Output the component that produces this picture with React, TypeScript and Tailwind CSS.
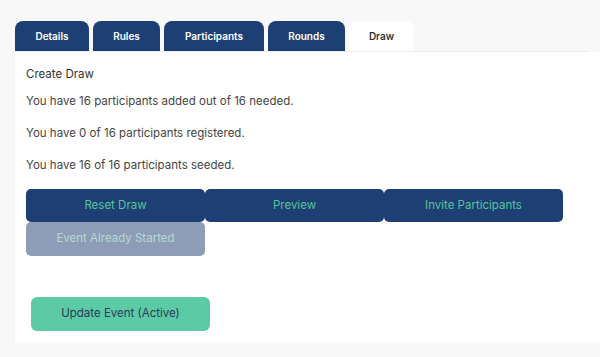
import React from 'react';

const tabs = [
  { label: 'Details', width: 'w-[74px]' },
  { label: 'Rules', width: 'w-[67px]' },
  { label: 'Participants', width: 'w-[100px]' },
  { label: 'Rounds', width: 'w-[77px]' },
];

const lines = [
  'You have 16 participants added out of 16 needed.',
  'You have 0 of 16 participants registered.',
  'You have 16 of 16 participants seeded.',
];

const actions = ['Reset Draw', 'Preview', 'Invite Participants'];

export default function App() {
  return (
    <div className="w-[600px] h-[357px] bg-[#f8f8f8] font-['Inter','Liberation_Sans',sans-serif] pt-[21px] pl-[15px] overflow-hidden">
      {/* Tab bar */}
      <div className="flex gap-[4px] w-[573px] border-b border-[#ececec]">
        {tabs.map((t) => (
          <div
            key={t.label}
            className={`${t.width} h-[30px] rounded-t-[8px] bg-[#1e3f73] text-white text-[10px] font-semibold flex items-center justify-center`}
          >
            {t.label}
          </div>
        ))}
        <div className="w-[65px] h-[30px] rounded-t-[8px] bg-white text-[#333] text-[10px] font-semibold flex items-center justify-center">
          Draw
        </div>
      </div>

      {/* Panel */}
      <div className="bg-white h-[291px] pl-[11px] pt-[14px]">
        <div className="text-[11.5px] text-[#333] leading-[16px]">Create Draw</div>
        <div className="mt-[11px] flex flex-col gap-[16px]">
          {lines.map((l) => (
            <div key={l} className="text-[11.5px] text-[#444] leading-[16px]">
              {l}
            </div>
          ))}
        </div>

        <div className="mt-[16px] flex">
          {actions.map((a) => (
            <div
              key={a}
              className="w-[179px] h-[33px] rounded-[5px] bg-[#1e3f73] text-[#56c4a0] text-[11.5px] flex items-center justify-center"
            >
              {a}
            </div>
          ))}
        </div>
        <div className="w-[179px] h-[34px] rounded-[5px] bg-[#8e9db7] text-[#b5d9d0] text-[11.5px] flex items-center justify-center">
          Event Already Started
        </div>

        <div className="mt-[41px] ml-[5px] w-[179px] h-[34px] rounded-[6px] bg-[#5ccaa5] text-[#2b3b58] text-[11.5px] flex items-center justify-center">
          Update Event (Active)
        </div>
      </div>
    </div>
  );
}
